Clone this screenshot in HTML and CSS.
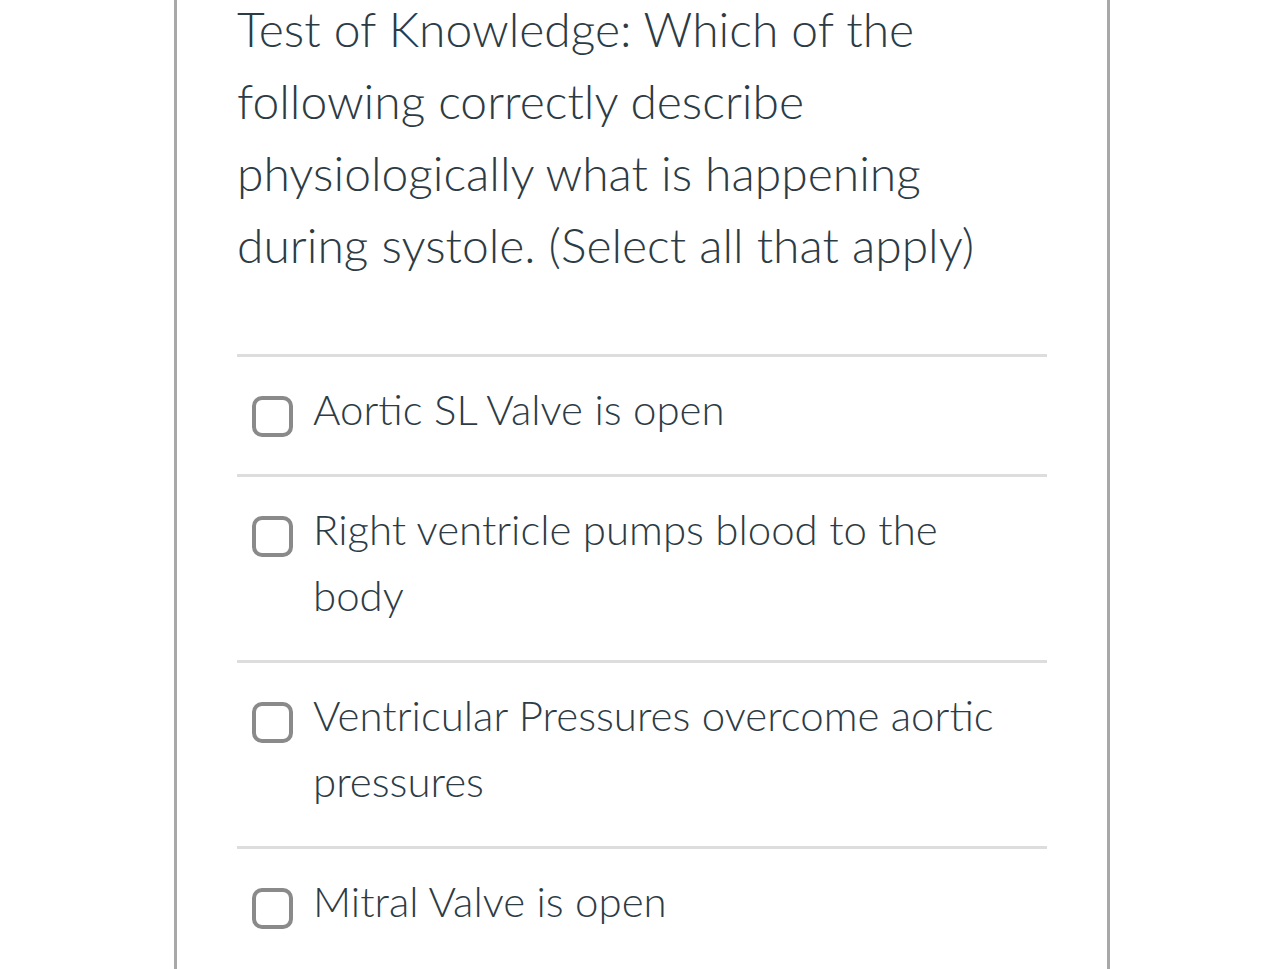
FILE: index.html
```html
<!DOCTYPE html>
<html lang="en">
<head>
<meta charset="utf-8">
<title>Quiz question</title>
<link rel="stylesheet" href="styles.css">
</head>
<body>
<div class="page">
  <div class="card">
    <div class="question">Test of Knowledge: Which of the following correctly describe physiologically what is happening during systole. (Select all that apply)</div>
    <div class="answers">
      <label class="answer"><span class="box"></span><span class="text">Aortic SL Valve is open</span></label>
      <label class="answer"><span class="box"></span><span class="text">Right ventricle pumps blood to the body</span></label>
      <label class="answer"><span class="box"></span><span class="text">Ventricular Pressures overcome aortic pressures</span></label>
      <label class="answer"><span class="box"></span><span class="text">Mitral Valve is open</span></label>
    </div>
  </div>
</div>
</body>
</html>
```
FILE: styles.css
```css
html, body {
  margin: 0;
  padding: 0;
  background: #fff;
  overflow: hidden;
}
body {
  font-family: Lato, "Open Sans", sans-serif;
  color: #2d3b45;
}
.page {
  display: flex;
  padding-left: 174px;
  height: 969px;
}
.card {
  width: 810px;
  border-left: 3px solid #a8a8a8;
  border-right: 3px solid #a8a8a8;
  padding: 0 60px;
  margin-top: -7px;
  height: 1000px;
}
.question {
  font-size: 48px;
  line-height: 72px;
  font-weight: 300;
  padding-right: 60px;
}
.answers {
  margin-top: 73px;
}
.answer {
  display: flex;
  align-items: flex-start;
  border-top: 3px solid #dddddd;
  padding: 19px 0 32px 15px;
}
.box {
  flex: none;
  width: 33px;
  height: 33px;
  border: 4.5px solid #8a8a8a;
  border-radius: 10px;
  margin-top: 20px;
  margin-right: 20px;
}
.text {
  font-size: 42px;
  line-height: 66px;
  font-weight: 300;
  padding-right: 30px;
}
```
